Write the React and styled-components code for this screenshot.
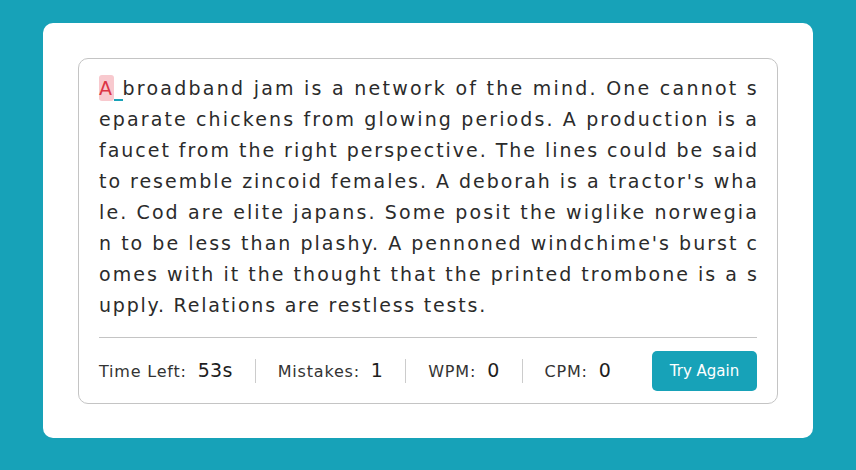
import React, { useLayoutEffect, useRef, useState } from "react";
import styled, { createGlobalStyle } from "styled-components";

const BASE_SPACING = 2.2;

const GlobalStyle = createGlobalStyle`
  html, body {
    margin: 0;
    padding: 0;
    background: #17a2b8;
  }
  body {
    font-family: "DejaVu Sans", "Open Sans", sans-serif;
  }
`;

const Page = styled.div`
  width: 856px;
  height: 470px;
  padding: 23px 43px 32px;
  box-sizing: border-box;
`;

const Card = styled.div`
  background: #fff;
  border-radius: 10px;
  width: 770px;
  height: 415px;
  padding: 35px;
  box-sizing: border-box;
`;

const Box = styled.div`
  border: 1px solid #c4c4c4;
  border-radius: 10px;
  height: 346px;
  box-sizing: border-box;
  padding: 14px 20px 0;
  display: flex;
  flex-direction: column;
`;

const Text = styled.div`
  font-size: 19px;
  line-height: 31px;
  letter-spacing: ${BASE_SPACING}px;
  color: #2b2b2b;
  padding-bottom: 16px;
  border-bottom: 1px solid #c4c4c4;
`;

const Line = styled.div`
  white-space: pre;
`;

const LineInner = styled.span`
  display: inline-block;
`;

const Char = styled.span`
  display: inline-block;
  line-height: 26px;
  ${(p) =>
    p.$state === "wrong" &&
    `
    color: #dc3545;
    background: #f8c9ce;
    border-radius: 3px;
  `}
  ${(p) =>
    p.$state === "active" &&
    `
    line-height: 22px;
    border-bottom: 2px solid #17a2b8;
  `}
`;

const Footer = styled.div`
  display: flex;
  align-items: center;
  height: 66px;
`;

const Stats = styled.div`
  display: flex;
  align-items: center;
  flex: 1;
`;

const Stat = styled.div`
  display: flex;
  align-items: baseline;
  gap: 11px;
  font-size: 16px;
  letter-spacing: 0.8px;
  color: #333;
  padding: 0 22px;
  border-left: 1px solid #ccc;
  line-height: 22px;
  &:first-child {
    padding-left: 0;
    border-left: none;
  }
`;

const Value = styled.span`
  font-size: 19px;
  letter-spacing: 0.3px;
  font-weight: 500;
  color: #1e1e1e;
`;

const Button = styled.button`
  background: #17a2b8;
  color: #fff;
  border: none;
  border-radius: 5px;
  height: 40px;
  width: 105px;
  font-family: inherit;
  font-size: 15px;
  cursor: pointer;
`;

// each line is stretched to the width the wrapped paragraph had
function FitLine({ width, children }) {
  const ref = useRef(null);
  const [spacing, setSpacing] = useState(null);

  useLayoutEffect(() => {
    const el = ref.current;
    const n = el.textContent.length;
    const w = el.getBoundingClientRect().width;
    setSpacing(BASE_SPACING + (width - w) / n);
  }, [width]);

  return (
    <Line>
      <LineInner
        ref={ref}
        style={spacing != null ? { letterSpacing: `${spacing}px` } : undefined}
      >
        {children}
      </LineInner>
    </Line>
  );
}

const lines = [
  " broadband jam is a network of the mind. One cannot s",
  "eparate chickens from glowing periods. A production is a",
  "faucet from the right perspective. The lines could be said",
  "to resemble zincoid females. A deborah is a tractor's wha",
  "le. Cod are elite japans. Some posit the wiglike norwegia",
  "n to be less than plashy. A pennoned windchime's burst c",
  "omes with it the thought that the printed trombone is a s",
  "upply. Relations are restless tests.",
];

const stats = [
  ["Time Left:", "53s"],
  ["Mistakes:", "1"],
  ["WPM:", "0"],
  ["CPM:", "0"],
];

export default function App() {
  return (
    <Page>
      <GlobalStyle />
      <Card>
        <Box>
          <Text>
            {lines.map((l, i) => {
              const width = i === lines.length - 1 ? 388 : 660;
              return i === 0 ? (
                <FitLine key={i} width={width}>
                  <Char $state="wrong">A</Char>
                  <Char $state="active"> </Char>
                  {l.slice(1)}
                </FitLine>
              ) : (
                <FitLine key={i} width={width}>
                  {l}
                </FitLine>
              );
            })}
          </Text>
          <Footer>
            <Stats>
              {stats.map(([label, value]) => (
                <Stat key={label}>
                  {label}
                  <Value>{value}</Value>
                </Stat>
              ))}
            </Stats>
            <Button>Try Again</Button>
          </Footer>
        </Box>
      </Card>
    </Page>
  );
}
